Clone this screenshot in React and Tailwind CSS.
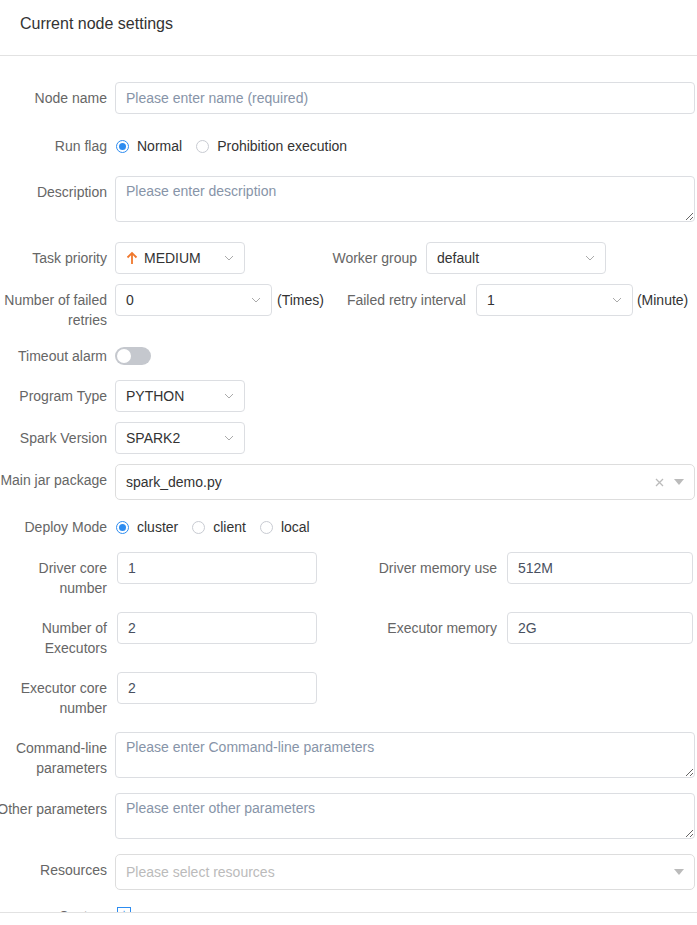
import React from 'react';

const FONT = { fontFamily: '"Liberation Sans", Arial, sans-serif' };

function Chevron() {
  return (
    <svg width="10" height="6" viewBox="0 0 10 6" className="shrink-0">
      <polyline points="1,1 5,5 9,1" fill="none" stroke="#aaa" strokeWidth="1" />
    </svg>
  );
}

function Label({ lines, className = 'w-[107px]' }) {
  return (
    <div className={`flex shrink-0 justify-end pt-[6px] text-right text-[14px] leading-[20px] text-[#666] ${className}`}>
      <div className="whitespace-nowrap">
        {lines.map((l, i) => (
          <div key={i}>{l}</div>
        ))}
      </div>
    </div>
  );
}

function Select({ value, width, icon }) {
  return (
    <div
      className={`flex h-[32px] shrink-0 items-center justify-between rounded-[4px] border border-[#dcdee2] bg-white pl-[10px] pr-[10px] text-[14px] text-[#333] ${width}`}
    >
      <span className="flex items-center gap-[6px]">
        {icon}
        {value}
      </span>
      <Chevron />
    </div>
  );
}

function Input({ value, placeholder, width = 'flex-1' }) {
  return (
    <input
      readOnly
      defaultValue={value}
      placeholder={placeholder}
      className={`h-[32px] min-w-0 rounded-[4px] border border-[#dcdee2] bg-white px-[10px] text-[14px] text-[#495060] outline-none placeholder:text-[#8794a8] ${width}`}
      style={FONT}
    />
  );
}

function Area({ placeholder }) {
  return (
    <textarea
      readOnly
      placeholder={placeholder}
      className="h-[46px] min-w-0 flex-1 resize rounded-[4px] border border-[#dcdee2] bg-white px-[10px] py-[4px] text-[14px] leading-[20px] text-[#495060] outline-none placeholder:text-[#8794a8]"
      style={FONT}
    />
  );
}

function Radio({ checked, label }) {
  return (
    <span className="flex items-center gap-[8px] text-[14px] text-[#333]">
      <span
        className={`flex h-[13px] w-[13px] items-center justify-center rounded-full border bg-white ${
          checked ? 'border-[#2d8cf0]' : 'border-[#c8cbd2]'
        }`}
      >
        {checked && <span className="h-[7px] w-[7px] rounded-full bg-[#2d8cf0]" />}
      </span>
      {label}
    </span>
  );
}

function ArrowUp() {
  return (
    <svg width="12" height="14" viewBox="0 0 12 14">
      <path d="M6 2 L6 13 M1.5 6.5 L6 2 L10.5 6.5" fill="none" stroke="#f0782d" strokeWidth="1.8" />
    </svg>
  );
}

export default function App() {
  return (
    <div className="flex h-[925px] w-[697px] flex-col overflow-hidden bg-white" style={FONT}>
      <div className="flex h-[56px] shrink-0 items-center border-b border-[#e2e2e2] pb-[7px] pl-[20px] text-[16px] text-[#333]">
        Current node settings
      </div>

      <div className="flex-1 overflow-hidden pr-[2px]">
        {/* Node name */}
        <div className="mt-[26px] flex gap-[8px]">
          <Label lines={['Node name']} />
          <Input placeholder="Please enter name (required)" />
        </div>

        {/* Run flag */}
        <div className="mt-[16px] flex h-[32px] gap-[9px]">
          <Label lines={['Run flag']} />
          <div className="flex items-center gap-[14px]">
            <Radio checked label="Normal" />
            <Radio label="Prohibition execution" />
          </div>
        </div>

        {/* Description */}
        <div className="mt-[14px] flex gap-[8px]">
          <Label lines={['Description']} />
          <Area placeholder="Please enter description" />
        </div>

        {/* Task priority / Worker group */}
        <div className="mt-[20px] flex">
          <Label lines={['Task priority']} />
          <div className="ml-[8px]">
            <Select value="MEDIUM" width="w-[130px]" icon={<ArrowUp />} />
          </div>
          <Label lines={['Worker group']} className="w-[172px]" />
          <div className="ml-[9px]">
            <Select value="default" width="w-[180px]" />
          </div>
        </div>

        {/* Failed retries */}
        <div className="mt-[10px] flex">
          <Label lines={['Number of failed', 'retries']} />
          <div className="ml-[8px] flex h-[32px] items-center gap-[5px]">
            <Select value="0" width="w-[157px]" />
            <span className="text-[14px] text-[#333]">(Times)</span>
          </div>
          <Label lines={['Failed retry interval']} className="w-[142px]" />
          <div className="ml-[10px] flex h-[32px] items-center gap-[4px]">
            <Select value="1" width="w-[157px]" />
            <span className="text-[14px] text-[#333]">(Minute)</span>
          </div>
        </div>

        {/* Timeout alarm */}
        <div className="mt-[10px] flex h-[32px] gap-[8px]">
          <Label lines={['Timeout alarm']} />
          <div className="flex items-center">
            <span className="flex h-[18px] w-[36px] items-center rounded-full bg-[#c5c8ce] px-[2px]">
              <span className="h-[14px] w-[14px] rounded-full bg-white" />
            </span>
          </div>
        </div>

        {/* Program Type */}
        <div className="mt-[8px] flex gap-[8px]">
          <Label lines={['Program Type']} />
          <Select value="PYTHON" width="w-[130px]" />
        </div>

        {/* Spark Version */}
        <div className="mt-[10px] flex gap-[8px]">
          <Label lines={['Spark Version']} />
          <Select value="SPARK2" width="w-[130px]" />
        </div>

        {/* Main jar package */}
        <div className="mt-[10px] flex gap-[8px]">
          <Label lines={['Main jar package']} />
          <div className="flex h-[36px] flex-1 items-center justify-between rounded-[5px] border border-[#ddd] bg-white pl-[10px] pr-[10px] text-[14px] text-[#333]">
            <span>spark_demo.py</span>
            <span className="flex items-center gap-[10px]">
              <svg width="9" height="9" viewBox="0 0 9 9">
                <path d="M1 1 L8 8 M8 1 L1 8" stroke="#bbb" strokeWidth="1.3" />
              </svg>
              <svg width="10" height="6" viewBox="0 0 10 6">
                <path d="M0 0 L10 0 L5 6 Z" fill="#bbb" />
              </svg>
            </span>
          </div>
        </div>

        {/* Deploy Mode */}
        <div className="mt-[11px] flex h-[32px] gap-[9px]">
          <Label lines={['Deploy Mode']} />
          <div className="flex items-center gap-[14px]">
            <Radio checked label="cluster" />
            <Radio label="client" />
            <Radio label="local" />
          </div>
        </div>

        {/* Driver */}
        <div className="mt-[9px] flex">
          <Label lines={['Driver core', 'number']} />
          <div className="ml-[10px]">
            <Input value="1" width="w-[200px]" />
          </div>
          <Label lines={['Driver memory use']} className="w-[180px]" />
          <div className="ml-[10px]">
            <Input value="512M" width="w-[186px]" />
          </div>
        </div>

        {/* Executors */}
        <div className="mt-[14px] flex">
          <Label lines={['Number of', 'Executors']} />
          <div className="ml-[10px]">
            <Input value="2" width="w-[200px]" />
          </div>
          <Label lines={['Executor memory']} className="w-[180px]" />
          <div className="ml-[10px]">
            <Input value="2G" width="w-[186px]" />
          </div>
        </div>

        {/* Executor core */}
        <div className="mt-[14px] flex">
          <Label lines={['Executor core', 'number']} />
          <div className="ml-[10px]">
            <Input value="2" width="w-[200px]" />
          </div>
        </div>

        {/* Command-line parameters */}
        <div className="mt-[14px] flex gap-[8px]">
          <Label lines={['Command-line', 'parameters']} />
          <Area placeholder="Please enter Command-line parameters" />
        </div>

        {/* Other parameters */}
        <div className="mt-[15px] flex gap-[8px]">
          <Label lines={['Other parameters']} />
          <Area placeholder="Please enter other parameters" />
        </div>

        {/* Resources */}
        <div className="mt-[15px] flex gap-[8px]">
          <Label lines={['Resources']} />
          <div className="flex h-[36px] flex-1 items-center justify-between rounded-[5px] border border-[#ddd] bg-white pl-[10px] pr-[10px] text-[14px] text-[#bbb]">
            <span>Please select resources</span>
            <svg width="10" height="6" viewBox="0 0 10 6">
              <path d="M0 0 L10 0 L5 6 Z" fill="#bbb" />
            </svg>
          </div>
        </div>

        {/* Custom parameters */}
        <div className="mt-[10px] flex">
          <Label lines={['Custom', 'Parameters']} />
          <div className="ml-[10px] pt-[7px]">
            <span className="flex h-[14px] w-[14px] items-center justify-center border border-[#2d8cf0] text-[12px] leading-none text-[#2d8cf0]">
              +
            </span>
          </div>
        </div>
      </div>

      <div className="h-[13px] shrink-0 border-t border-[#e2e2e2] bg-white" />
    </div>
  );
}
